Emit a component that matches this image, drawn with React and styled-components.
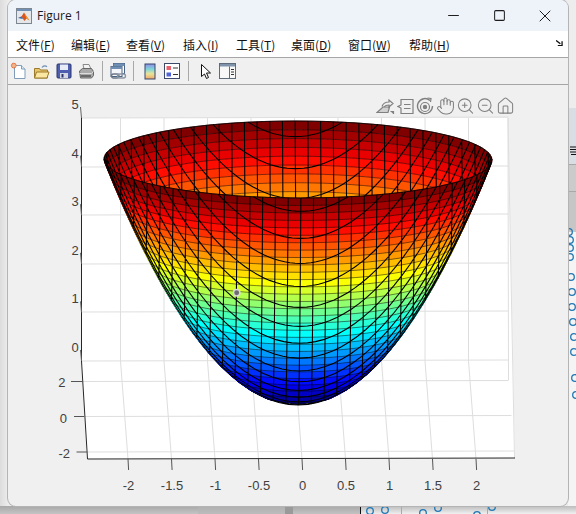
import styled, { createGlobalStyle } from 'styled-components'
import { Hand, Home, Minus, Square, X, ZoomIn, ZoomOut } from 'lucide-react'

const GlobalStyle = createGlobalStyle`
  html, body {
    margin: 0;
    padding: 0;
    overflow: hidden;
    background: #e4e4e4;
  }
`

const Desktop = styled.div`
  position: relative;
  width: 576px;
  height: 514px;
  display: grid;
  grid-template-columns: 568px 8px;
  grid-template-rows: 506px 8px;
  overflow: hidden;
  background: linear-gradient(90deg, #dcdcdc, #ececec 8px);
`

const RightRail = styled.div`
  grid-column: 2;
  grid-row: 1;
  display: flex;
  flex-direction: column;
`

const RailBand = styled.div`
  height: ${props => props.$h}px;
  background: ${props => props.$bg};
  border-bottom: ${props => (props.$line ? '1px solid #a8a8a8' : 'none')};
  box-sizing: border-box;
  flex: ${props => (props.$grow ? 1 : 'none')};
`

const BottomRail = styled.div`
  grid-column: 1 / 3;
  grid-row: 2;
  display: flex;
`

const BottomBand = styled.div`
  width: ${props => props.$w}px;
  background: ${props => props.$bg};
  border-right: ${props => (props.$line ? `1px solid ${props.$line}` : 'none')};
  box-sizing: border-box;
`

const Scatter = styled.svg`
  position: absolute;
  left: 0;
  top: 0;
`

const Window = styled.div`
  position: absolute;
  left: 8px;
  top: 0;
  width: 560px;
  height: 506px;
  display: flex;
  flex-direction: column;
  border-radius: 8px;
  overflow: hidden;
  background: #f0f0f0;
  box-shadow: 0 0 0 1px #b4b4b4;
`

const TitleBar = styled.div`
  height: 31px;
  flex: none;
  display: flex;
  align-items: center;
  background: #eef3fa;
  padding-left: 8px;
`

const TitleText = styled.span`
  margin-left: 5px;
  font: 12px "Open Sans", "Noto Sans", sans-serif;
  color: #1a1a1a;
`

const WindowButtons = styled.div`
  margin-left: auto;
  display: flex;
  align-items: center;
  color: #1c1c1c;
`

const WindowButton = styled.div`
  width: 46px;
  height: 31px;
  display: flex;
  align-items: center;
  justify-content: center;
`

const MenuBar = styled.div`
  height: 27px;
  flex: none;
  box-sizing: border-box;
  display: flex;
  align-items: center;
  padding: 0 5px 0 8px;
  background: #fff;
  border-bottom: 1px solid #a6a6a6;
`

const MenuItem = styled.span`
  width: ${props => props.$w}px;
  font: 12px "Noto Sans CJK SC", "Liberation Sans", sans-serif;
  color: #111;
  white-space: nowrap;
`

const DockArrow = styled.svg`
  margin-left: auto;
  margin-top: -2px;
`

const ToolBar = styled.div`
  height: 27px;
  flex: none;
  box-sizing: border-box;
  display: flex;
  align-items: center;
  background: #f0f0f0;
  border-bottom: 1px solid #a6a6a6;
`

const ToolButton = styled.div`
  width: 22.5px;
  height: 26px;
  display: flex;
  align-items: center;
  justify-content: center;
`

const ToolSeparator = styled.div`
  width: ${props => props.$w}px;
  height: 20px;
  display: flex;
  justify-content: center;
  &::after {
    content: '';
    width: 1px;
    height: 100%;
    background: #a8a8a8;
  }
`

const FigureArea = styled.div`
  position: relative;
  flex: 1;
`

const AxesToolbar = styled.div`
  position: absolute;
  left: 367.5px;
  top: 11px;
  display: flex;
  align-items: center;
  gap: 1px;
  color: #808080;
`

const AxesTool = styled.div`
  width: 19px;
  height: 20px;
  display: flex;
  align-items: center;
  justify-content: center;
`

const Plot = styled.svg`
  display: block;
`

const GridLine = styled.line`
  stroke: #dedede;
  stroke-width: 1;
`

const AxisLine = styled.line`
  stroke: ${props => props.$tick || '#262626'};
  stroke-width: 1;
`

const TickLabel = styled.text`
  font: 13px "Liberation Sans", Arial, sans-serif;
  fill: #404040;
`

const menus = [
  ['文件', 'F', 55],
  ['编辑', 'E', 55],
  ['查看', 'V', 57],
  ['插入', 'I', 53],
  ['工具', 'T', 55],
  ['桌面', 'D', 57],
  ['窗口', 'W', 61],
  ['帮助', 'H', 60],
]

// surface projection, u = radius (0..1), all in page pixels
const K = 244
const BASE = 403.5
const B = 38.5
const SHEAR = 2.85
const FOLD = B / (2 * K)
const RINGS = 30
const SEGMENTS = 144

const project = (x, y) => [
  298 + 194 * x + SHEAR * y,
  BASE - K * (x * x + y * y) + B * y,
]

const toPath = pts =>
  pts.map((p, i) => `${i ? 'L' : 'M'}${p[0].toFixed(2)} ${p[1].toFixed(2)}`).join('')

const clamp = v => Math.max(0, Math.min(1, v))

const jet = t => {
  const r = clamp(1.5 - Math.abs(4 * t - 3))
  const g = clamp(1.5 - Math.abs(4 * t - 2))
  const b = clamp(1.5 - Math.abs(4 * t - 1))
  return `rgb(${Math.round(r * 255)},${Math.round(g * 255)},${Math.round(b * 255)})`
}

function buildBands() {
  const back = []
  const front = []
  for (let i = 0; i < RINGS; i++) {
    const u0 = Math.sqrt(i / RINGS)
    const u1 = Math.sqrt((i + 1) / RINGS)
    const um = (u0 + u1) / 2
    let dBack = ''
    let dFront = ''
    for (let j = 0; j < SEGMENTS; j++) {
      const a0 = (j / SEGMENTS) * Math.PI * 2
      const a1 = ((j + 1) / SEGMENTS) * Math.PI * 2
      const cell = toPath([
        project(u0 * Math.cos(a0), u0 * Math.sin(a0)),
        project(u1 * Math.cos(a0), u1 * Math.sin(a0)),
        project(u1 * Math.cos(a1), u1 * Math.sin(a1)),
        project(u0 * Math.cos(a1), u0 * Math.sin(a1)),
      ]) + 'Z'
      if (um * Math.sin((a0 + a1) / 2) < FOLD) dBack += cell
      else dFront += cell
    }
    const color = jet(i / (RINGS - 1))
    back.push({ d: dBack, color })
    front.push({ d: dFront, color })
  }
  return { back, front }
}

function buildLines() {
  const back = { heavy: '', ring: '' }
  const front = { heavy: '', ring: '' }
  const sample = (from, to, fn) => {
    const pts = []
    for (let n = 0; n <= 40; n++) pts.push(fn(from + ((to - from) * n) / 40))
    return toPath(pts)
  }
  for (let k = -15; k <= 15; k++) {
    const a = k * 0.0655
    const s = Math.sqrt(Math.max(0, 1 - a * a))
    // x = const
    if (-s < FOLD) back.heavy += sample(-s, Math.min(FOLD, s), t => project(a, t))
    if (s > FOLD) front.heavy += sample(Math.max(FOLD, -s), s, t => project(a, t))
    // y = const
    const y0 = (k * 0.97) / 15
    const w = Math.sqrt(Math.max(0, 1 - y0 * y0))
    const line = sample(-w, w, t => project(t, y0))
    if (y0 < FOLD) back.heavy += line
    else front.heavy += line
  }
  for (let i = 1; i <= RINGS; i++) {
    const u = Math.sqrt(i / RINGS)
    const split = u > FOLD ? Math.asin(FOLD / u) : Math.PI / 2
    back.ring += sample(Math.PI - split, Math.PI * 2 + split, a => project(u * Math.cos(a), u * Math.sin(a)))
    front.ring += sample(split, Math.PI - split, a => project(u * Math.cos(a), u * Math.sin(a)))
  }
  const outline = sample(0, Math.PI * 2, a => project(Math.cos(a), Math.sin(a)))
  return { back, front, outline }
}

const bands = buildBands()
const lines = buildLines()

const xLabels = ['-2', '-1.5', '-1', '-0.5', '0', '0.5', '1', '1.5', '2']
const zLabels = [5, 4, 3, 2, 1, 0]
const scatter = [
  [569, 232], [570, 240], [570, 248], [570, 257], [571, 277], [572, 292], [572, 307],
  [573, 322], [574, 337], [574, 352], [575, 378], [576, 395],
  [370, 511], [385, 510], [423, 513], [438, 508], [477, 515], [492, 507],
]

function MatlabIcon() {
  return (
    <svg width="16" height="16" viewBox="0 0 16 16">
      <rect x="0.5" y="0.5" width="15" height="15" fill="#e4e7ea" stroke="#7d8791" />
      <rect x="1" y="1" width="14" height="2" fill="#6f8fb5" />
      <path d="M2 10l3.500-1.500L8 4.500l2 3 3.500 5-3-2-2 2.500L6 9.500z" fill="#d9541e" />
      <path d="M2 10l3.500-1.500L7 11z" fill="#2f6fb5" />
      <path d="M8 4.500l2 3 3.500 5-3-2z" fill="#f0a030" />
    </svg>
  )
}

function NewIcon() {
  return (
    <svg width="18" height="18" viewBox="0 0 18 18">
      <path d="M4.500 3.500h7l3.500 3.500v9.500H4.500z" fill="#fff" stroke="#7f9db9" />
      <path d="M11.500 3.500V7H15" fill="#dfe9f3" stroke="#7f9db9" />
      <circle cx="3.800" cy="3.600" r="2.400" fill="#f3b48a" stroke="#e2632a" strokeWidth="0.8" />
    </svg>
  )
}

function OpenIcon() {
  return (
    <svg width="17" height="17" viewBox="0 0 17 17">
      <path d="M1.500 5.500h5l1 1.500h7v8h-13z" fill="#e9c56a" stroke="#9a7b2c" />
      <path d="M1.500 15l2-6h12.500l-2 6z" fill="#fbe7a2" stroke="#9a7b2c" />
      <path d="M9 4.500c1.500-2 3.500-2 5-.8" fill="none" stroke="#6f8fb5" strokeWidth="1.2" />
    </svg>
  )
}

function SaveIcon() {
  return (
    <svg width="16" height="16" viewBox="0 0 16 16">
      <rect x="1" y="1" width="14" height="14" rx="1" fill="#4f5fb0" stroke="#2d3670" />
      <rect x="4" y="1.500" width="8" height="5.500" fill="#e8ecf8" />
      <rect x="4" y="10" width="8" height="5" fill="#d5d8e2" />
      <rect x="5.500" y="11" width="2" height="3.500" fill="#2d3670" />
    </svg>
  )
}

function PrintIcon() {
  return (
    <svg width="17" height="17" viewBox="0 0 17 17">
      <path d="M5 1.500h6l2 4.500H6z" fill="#f3f3f3" stroke="#8a8a8a" />
      <path d="M1.500 8l3-2.500h9l2 3v4l-2 2.500h-11z" fill="#a9a9a9" stroke="#666" />
      <path d="M1.500 10.500l12 0 2-2" fill="none" stroke="#dcdcdc" />
      <path d="M3 13h10" stroke="#555" strokeWidth="1.4" />
    </svg>
  )
}

function LinkIcon() {
  return (
    <svg width="17" height="18" viewBox="0 0 17 18">
      <rect x="3.500" y="1.500" width="11" height="10" fill="#fff" stroke="#4a6282" />
      <rect x="3.500" y="1.500" width="11" height="2.500" fill="#6f8fb5" />
      <rect x="1" y="4.500" width="11" height="10" fill="#f5f7fa" stroke="#4a6282" />
      <rect x="1" y="4.500" width="11" height="2.500" fill="#6f8fb5" />
      <rect x="1.500" y="12" width="7.500" height="4" rx="2" fill="none" stroke="#6a7684" strokeWidth="1.4" />
      <rect x="7.500" y="12" width="8" height="4" rx="2" fill="none" stroke="#8c97a5" strokeWidth="1.4" />
    </svg>
  )
}

function ColorbarIcon() {
  return (
    <svg width="12" height="17" viewBox="0 0 12 17">
      <defs>
        <linearGradient id="barFill" x1="0" y1="0" x2="0" y2="1">
          <stop offset="0" stopColor="#8f8fe8" />
          <stop offset="0.35" stopColor="#7fd6d8" />
          <stop offset="0.65" stopColor="#e9e49a" />
          <stop offset="1" stopColor="#f0a868" />
        </linearGradient>
      </defs>
      <rect x="1" y="1" width="10" height="15" fill="url(#barFill)" stroke="#34466a" />
    </svg>
  )
}

function LegendIcon() {
  return (
    <svg width="16" height="16" viewBox="0 0 16 16">
      <rect x="0.500" y="0.500" width="15" height="15" fill="#fff" stroke="#3b4a6b" />
      <rect x="2.500" y="3" width="4.500" height="4" fill="#e8606a" />
      <rect x="2.500" y="9.500" width="4.500" height="4" fill="#5064d8" />
      <path d="M9 5h5M9 11.500h5" stroke="#333" strokeWidth="1.2" />
    </svg>
  )
}

function ArrowIcon() {
  return (
    <svg width="14" height="17" viewBox="0 0 14 17">
      <path d="M3.500 1.500v12l3-2.500 2 4.500 2-1-2-4.500h4z" fill="#fff" stroke="#111" strokeLinejoin="round" />
    </svg>
  )
}

function PanelIcon() {
  return (
    <svg width="17" height="16" viewBox="0 0 17 16">
      <rect x="0.500" y="0.500" width="16" height="15" fill="#f8f8f8" stroke="#5d6b7a" />
      <rect x="1" y="1" width="15" height="2.500" fill="#7f94ab" />
      <path d="M10.500 3.500v12" stroke="#5d6b7a" />
      <path d="M12 6.500h3M12 9h3M12 11.500h3" stroke="#333" />
    </svg>
  )
}

function BrushTool() {
  return (
    <svg width="19" height="18" viewBox="0 0 19 18" fill="none" stroke="currentColor" strokeWidth="1.2">
      <path d="M1 15.500h11l1.500-5.500H7z" fill="#d0d0d0" />
      <path d="M6 9.500c1-3 3-4.500 7-4.500V3l4 3.500L13 10V8c-2.500 0-4 .5-5 2" />
      <path d="M14.500 14.500h3v2.500" fill="#808080" />
    </svg>
  )
}

function DataTipTool() {
  return (
    <svg width="17" height="17" viewBox="0 0 17 17" fill="none" stroke="currentColor" strokeWidth="1.2">
      <path d="M4 1.500h12v14H4V10L1 8.500 4 7z" />
      <path d="M7 6.500h6.500M7 10.500h6.500" />
    </svg>
  )
}

function RotateTool() {
  return (
    <svg width="18" height="18" viewBox="0 0 18 18" fill="none" stroke="currentColor" strokeWidth="1.2">
      <path d="M14 3.500A7.500 7.500 0 1 0 16.500 9" strokeWidth="1.4" />
      <path d="M11.500 1l3.500.5-.5 3.500" />
      <ellipse cx="9" cy="10" rx="4.500" ry="4.500" />
      <circle cx="9" cy="10" r="1.600" fill="currentColor" />
    </svg>
  )
}

function SurfacePlot() {
  return (
    <Plot width="560" height="421" viewBox="8 85 560 421">
      <polygon points="81,118 508,118 515,458 87,459 81,361" fill="#fff" />

      {[118, 167, 215, 264, 312, 361].map(y => (
        <GridLine key={y} x1="81" y1={y} x2="508.500" y2={y - 1} />
      ))}
      <GridLine x1="81" y1="381.500" x2="508.500" y2="380.500" />
      <GridLine x1="84" y1="416.500" x2="511.500" y2="415.500" />
      <GridLine x1="87" y1="452" x2="514" y2="451" />
      <GridLine x1="508" y1="118" x2="508.500" y2="380" />
      <GridLine x1="508" y1="118" x2="514.500" y2="458" />
      {xLabels.map((_, i) => {
        const top = 120.5 + 43.5 * i
        return (
          <g key={i}>
            <GridLine x1={top} y1="118" x2={top} y2="361" />
            <GridLine x1={top} y1="361" x2={top + 7.5} y2="459" />
          </g>
        )
      })}

      {bands.back.map((b, i) => (
        <path key={i} d={b.d} fill={b.color} stroke={b.color} strokeWidth="0.5" />
      ))}
      <path d={lines.back.ring} fill="none" stroke="#000" strokeOpacity="0.6" strokeWidth="0.8" />
      <path d={lines.back.heavy} fill="none" stroke="#000" strokeWidth="1.1" />
      {bands.front.map((b, i) => (
        <path key={i} d={b.d} fill={b.color} stroke={b.color} strokeWidth="0.5" />
      ))}
      <path d={lines.front.ring} fill="none" stroke="#000" strokeOpacity="0.6" strokeWidth="0.8" />
      <path d={lines.front.heavy} fill="none" stroke="#000" strokeWidth="1.1" />
      <path d={lines.outline} fill="none" stroke="#000" strokeOpacity="0.8" strokeWidth="0.8" />

      <circle cx="236.700" cy="292.700" r="3.200" fill="#6e6e6e" stroke="#dcdcdc" strokeWidth="1.500" />

      <AxisLine x1="81.500" y1="118" x2="81.500" y2="361" />
      <AxisLine x1="81.500" y1="361" x2="87.500" y2="459" />
      <AxisLine x1="87.500" y1="459" x2="515" y2="458" />
      {zLabels.map((z, i) => {
        const y = 118 + 48.6 * i
        return (
          <g key={z}>
            <AxisLine $tick="#666" x1="80.500" y1={y - 11} x2="81.500" y2={y} />
            <TickLabel x="75" y={y - 9} textAnchor="middle">{z}</TickLabel>
          </g>
        )
      })}
      <AxisLine $tick="#555" x1="71" y1="381.500" x2="82" y2="381.500" />
      <AxisLine $tick="#555" x1="74" y1="416.500" x2="84" y2="416.500" />
      <AxisLine $tick="#555" x1="76.500" y1="452" x2="87" y2="452" />
      <TickLabel x="65.500" y="387" textAnchor="end">2</TickLabel>
      <TickLabel x="67" y="423" textAnchor="end">0</TickLabel>
      <TickLabel x="70" y="458" textAnchor="end">-2</TickLabel>
      {xLabels.map((label, i) => {
        const x = 128 + 43.5 * i
        return (
          <g key={label}>
            <AxisLine $tick="#555" x1={x} y1="459" x2={x + 0.6} y2="470" />
            <TickLabel x={x + 0.5} y="490" textAnchor="middle">{label}</TickLabel>
          </g>
        )
      })}
    </Plot>
  )
}

export default function App() {
  return (
    <Desktop>
      <GlobalStyle />
      <RightRail>
        <RailBand $h={108} $bg="#ededed" />
        <RailBand $h={57} $bg="#d9dde4" $line />
        <RailBand $h={27} $bg="#cbcbcb" $line />
        <RailBand $h={40} $bg="#c6c6c6" />
        <RailBand $grow $bg="#f4f4f4" />
      </RightRail>
      <BottomRail>
        <BottomBand $w={198} $bg="linear-gradient(180deg, #a8a8a8, #c4c4c4)" />
        <BottomBand $w={87} $bg="linear-gradient(180deg, #b0b0b0, #bcbcbc)" />
        <BottomBand $w={8} $bg="#9a9a9a" />
        <BottomBand $w={68} $bg="linear-gradient(180deg, #a8a8a8, #c2c2c2)" $line="#111" />
        <BottomBand $w={41} $bg="linear-gradient(180deg, #bcbcbc, #eeeeee)" $line="#aaa" />
        <BottomBand $w={86} $bg="linear-gradient(180deg, #bcbcbc, #f0f0f0)" $line="#aaa" />
        <BottomBand $w={88} $bg="linear-gradient(180deg, #bcbcbc, #f0f0f0)" />
      </BottomRail>
      <Scatter width="576" height="514">
        {scatter.map(([cx, cy]) => (
          <circle key={`${cx}-${cy}`} cx={cx} cy={cy} r="3.300" fill="none" stroke="#1f77b4" strokeWidth="1.3" />
        ))}
        <path d="M570 147h8M570 149.500h8M570 152h8M571 154.500h5" stroke="#111" strokeWidth="1.200" />
      </Scatter>

      <Window>
        <TitleBar>
          <MatlabIcon />
          <TitleText>Figure 1</TitleText>
          <WindowButtons>
            <WindowButton><Minus size={17} strokeWidth={1.4} /></WindowButton>
            <WindowButton><Square size={13} strokeWidth={1.85} /></WindowButton>
            <WindowButton><X size={20} strokeWidth={1.2} /></WindowButton>
          </WindowButtons>
        </TitleBar>

        <MenuBar>
          {menus.map(([name, key, w]) => (
            <MenuItem key={key} $w={w}>{name}(<u>{key}</u>)</MenuItem>
          ))}
          <DockArrow width="7" height="6" viewBox="0 0 8 7">
            <path d="M0 0.500l5 4M7 1.500v5H2" fill="none" stroke="#111" strokeWidth="1.500" />
          </DockArrow>
        </MenuBar>

        <ToolBar>
          <ToolButton><NewIcon /></ToolButton>
          <ToolButton><OpenIcon /></ToolButton>
          <ToolButton><SaveIcon /></ToolButton>
          <ToolButton><PrintIcon /></ToolButton>
          <ToolSeparator $w={8.75} />
          <ToolButton><LinkIcon /></ToolButton>
          <ToolSeparator $w={9.25} />
          <ToolButton><ColorbarIcon /></ToolButton>
          <ToolButton><LegendIcon /></ToolButton>
          <ToolSeparator $w={10} />
          <ToolButton><ArrowIcon /></ToolButton>
          <ToolButton><PanelIcon /></ToolButton>
        </ToolBar>

        <FigureArea>
          <SurfacePlot />
          <AxesToolbar>
            <AxesTool><BrushTool /></AxesTool>
            <AxesTool><DataTipTool /></AxesTool>
            <AxesTool><RotateTool /></AxesTool>
            <AxesTool><Hand size={20} strokeWidth={1.3} /></AxesTool>
            <AxesTool><ZoomIn size={20} strokeWidth={1.3} /></AxesTool>
            <AxesTool><ZoomOut size={20} strokeWidth={1.3} /></AxesTool>
            <AxesTool><Home size={20} strokeWidth={1.3} /></AxesTool>
          </AxesToolbar>
        </FigureArea>
      </Window>
    </Desktop>
  )
}
